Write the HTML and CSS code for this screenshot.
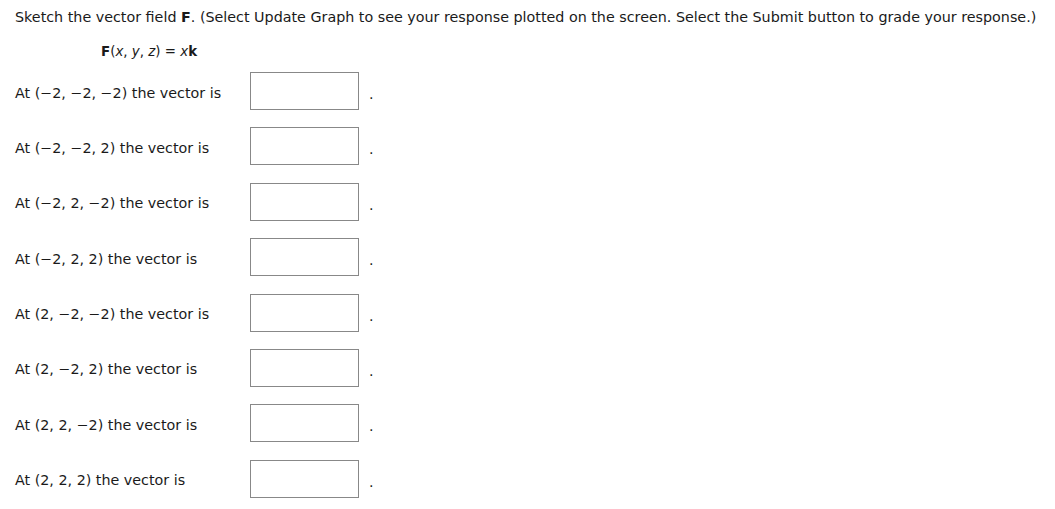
FILE: index.html
```html
<!DOCTYPE html>
<html>
<head>
<meta charset="utf-8">
<link rel="stylesheet" href="styles.css">
</head>
<body>
<div class="page">
  <p class="prompt">Sketch the vector field <b>F</b>. (Select Update Graph to see your response plotted on the screen. Select the Submit button to grade your response.)</p>
  <p class="formula"><b>F</b>(<i>x</i>, <i>y</i>, <i>z</i>) = <i>x</i><b>k</b></p>
  <div class="rows">
    <div class="row"><span class="label">At (&minus;2, &minus;2, &minus;2) the vector is</span><span class="box"></span><span class="dot">.</span></div>
    <div class="row"><span class="label">At (&minus;2, &minus;2, 2) the vector is</span><span class="box"></span><span class="dot">.</span></div>
    <div class="row"><span class="label">At (&minus;2, 2, &minus;2) the vector is</span><span class="box"></span><span class="dot">.</span></div>
    <div class="row"><span class="label">At (&minus;2, 2, 2) the vector is</span><span class="box"></span><span class="dot">.</span></div>
    <div class="row"><span class="label">At (2, &minus;2, &minus;2) the vector is</span><span class="box"></span><span class="dot">.</span></div>
    <div class="row"><span class="label">At (2, &minus;2, 2) the vector is</span><span class="box"></span><span class="dot">.</span></div>
    <div class="row"><span class="label">At (2, 2, &minus;2) the vector is</span><span class="box"></span><span class="dot">.</span></div>
    <div class="row"><span class="label">At (2, 2, 2) the vector is</span><span class="box"></span><span class="dot">.</span></div>
  </div>
</div>
</body>
</html>
```
FILE: styles.css
```css
html, body {
  margin: 0;
  padding: 0;
  background: #fff;
}
.page {
  padding: 8px 0 0 15px;
  font-family: "DejaVu Sans", Verdana, sans-serif;
  font-size: 14.3px;
  color: #1a1a1a;
  line-height: 18px;
}
.prompt {
  margin: 0;
}
.formula {
  margin: 17px 0 0 86px;
  font-size: 13.4px;
}
.rows {
  margin-top: 11px;
  display: flex;
  flex-direction: column;
  gap: 17.4px;
}
.row {
  display: flex;
  align-items: center;
  height: 38px;
}
.label {
  width: 235px;
  padding-top: 3px;
}
.box {
  width: 107px;
  height: 36px;
  border: 1px solid #888;
  background: #fff;
}
.dot {
  margin-left: 10px;
  padding-top: 6px;
}
```
